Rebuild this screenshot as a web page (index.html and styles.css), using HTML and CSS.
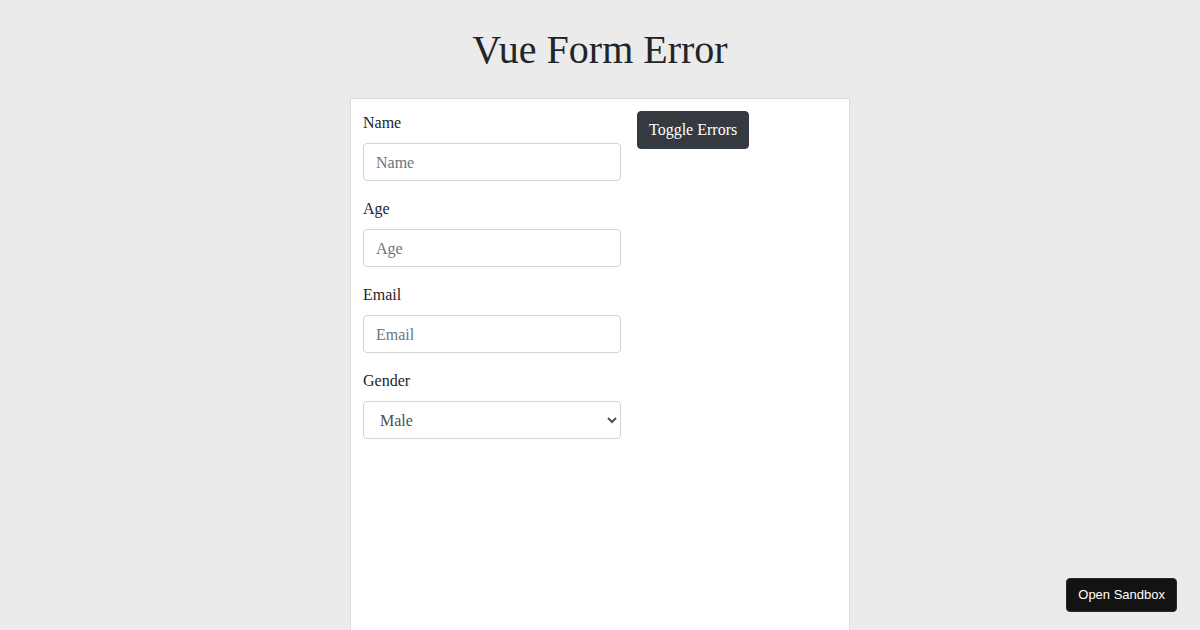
FILE: index.html
```html
<!DOCTYPE html>
<html lang="en">
<head>
    <meta charset="UTF-8">
    <meta name="viewport" content="width=device-width, initial-scale=1.0">
    <title>Vue Form Error</title>
    <link rel="stylesheet" href="styles.css">
</head>
<body>
    <div class="page">
        <h1 class="title">Vue Form Error</h1>

        <div class="card">
            <form class="form">
                <div class="form-group">
                    <label for="name">Name</label>
                    <input type="text" id="name" class="form-control" placeholder="Name">
                </div>
                <div class="form-group">
                    <label for="age">Age</label>
                    <input type="text" id="age" class="form-control" placeholder="Age">
                </div>
                <div class="form-group">
                    <label for="email">Email</label>
                    <input type="email" id="email" class="form-control" placeholder="Email">
                </div>
                <div class="form-group">
                    <label for="gender">Gender</label>
                    <select id="gender" class="form-control form-select">
                        <option>Male</option>
                        <option>Female</option>
                    </select>
                </div>
            </form>
            <div class="actions">
                <button type="button" class="btn">Toggle Errors</button>
            </div>
        </div>
    </div>

    <a href="#" class="sandbox-link">Open Sandbox</a>
</body>
</html>
```

FILE: styles.css
```css
body {
    margin: 0;
    padding: 0;
    background-color: #ebebeb;
    color: #212529;
    font-family: "Liberation Serif", "Times New Roman", serif;
    font-size: 16px;
    line-height: 1.5;
}

.page {
    padding-top: 26px;
}

.title {
    margin: 0 0 24px;
    text-align: center;
    font-size: 40px;
    font-weight: 400;
    line-height: 1.2;
}

.card {
    width: 474px;
    min-height: 600px;
    margin: 0 auto;
    padding: 12px;
    background: #ffffff;
    border: 1px solid #dadada;
    display: flex;
    gap: 16px;
    align-items: flex-start;
}

.form {
    width: 258px;
}

.form-group {
    margin-bottom: 16px;
}

.form-group label {
    display: block;
    margin-bottom: 8px;
}

.form-control {
    display: block;
    box-sizing: border-box;
    width: 100%;
    height: 38px;
    padding: 7px 12px 5px;
    font-family: inherit;
    font-size: 16px;
    line-height: 24px;
    color: #495057;
    background: #ffffff;
    border: 1px solid #ced4da;
    border-radius: 4px;
}

.form-control::placeholder {
    color: #6c757d;
}

.form-select {
    padding: 6px 8px 6px 12px;
}

.btn {
    padding: 6px 11px;
    font-family: inherit;
    font-size: 16px;
    line-height: 24px;
    color: #ffffff;
    background: #343a40;
    border: 1px solid #343a40;
    border-radius: 4px;
    cursor: pointer;
}

.sandbox-link {
    position: fixed;
    right: 23px;
    bottom: 18px;
    padding: 8px 11px;
    font-family: "Liberation Sans", Arial, sans-serif;
    font-size: 13px;
    line-height: 16px;
    color: #ffffff;
    background: #131313;
    border: 1px solid #2a2a2a;
    border-radius: 4px;
    text-decoration: none;
}
```
